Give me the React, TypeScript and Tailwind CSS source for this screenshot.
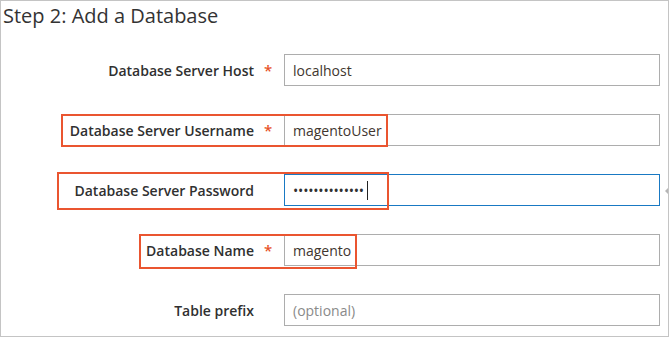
const font = { fontFamily: '"Open Sans", "Liberation Sans", sans-serif' };

const rows = [
  { label: 'Database Server Host', value: 'localhost', required: true },
  { label: 'Database Server Username', value: 'magentoUser', required: true },
  { label: 'Database Server Password', value: '••••••••••••••', password: true },
  { label: 'Database Name', value: 'magento', required: true },
  { label: 'Table prefix', placeholder: '(optional)' },
];

type Row = {
  label: string;
  value?: string;
  placeholder?: string;
  required?: boolean;
  password?: boolean;
};

const Field = ({ row }: { row: Row }) => (
  <div className="flex items-center h-[32px]">
    <div className="w-[253px] text-right text-[14px] font-semibold text-[#303030]">{row.label}</div>
    <div className="w-[30px] pl-[10px] text-[15px] font-semibold text-[#e8532a] leading-none">
      {row.required ? '*' : ''}
    </div>
    <div
      className={`relative w-[376px] h-[32px] flex items-center pl-[8px] text-[14px] border ${
        row.password ? 'border-[#1979c3]' : 'border-[#adadad]'
      }`}
    >
      {row.value && (
        <span className={row.password ? 'text-[#303030] text-[14px] tracking-[-0.2px]' : 'text-[#41362f]'}>
          {row.value}
        </span>
      )}
      {row.password && <span className="ml-[3px] w-[1px] h-[19px] bg-[#222]" />}
      {row.placeholder && <span className="text-[#8a8a8a]">{row.placeholder}</span>}
    </div>
  </div>
);

export default function App() {
  return (
    <div style={font} className="relative w-[669px] h-[337px] bg-white border border-[#c4c4c4] overflow-hidden">
      <h2 className="pl-[2px] pt-[3px] text-[20px] leading-[24px] font-normal text-[#333]">Step 2: Add a Database</h2>
      <div className="mt-[26px] flex flex-col gap-[28px]">
        {rows.map((r) => (
          <Field key={r.label} row={r} />
        ))}
      </div>

      {/* annotation boxes */}
      <div className="absolute left-[60px] top-[113px] w-[327px] h-[33px] border-2 border-[#ea5530]" />
      <div className="absolute left-[56px] top-[171px] w-[332px] h-[38px] border-2 border-[#ea5530]" />
      <div className="absolute left-[138px] top-[233px] w-[218px] h-[35px] border-2 border-[#ea5530]" />

      {/* tooltip arrow, cut off */}
      <div className="absolute left-[664px] top-[186px] w-0 h-0 border-y-[4px] border-y-transparent border-r-[4px] border-r-[#b5b5b5]" />
    </div>
  );
}
